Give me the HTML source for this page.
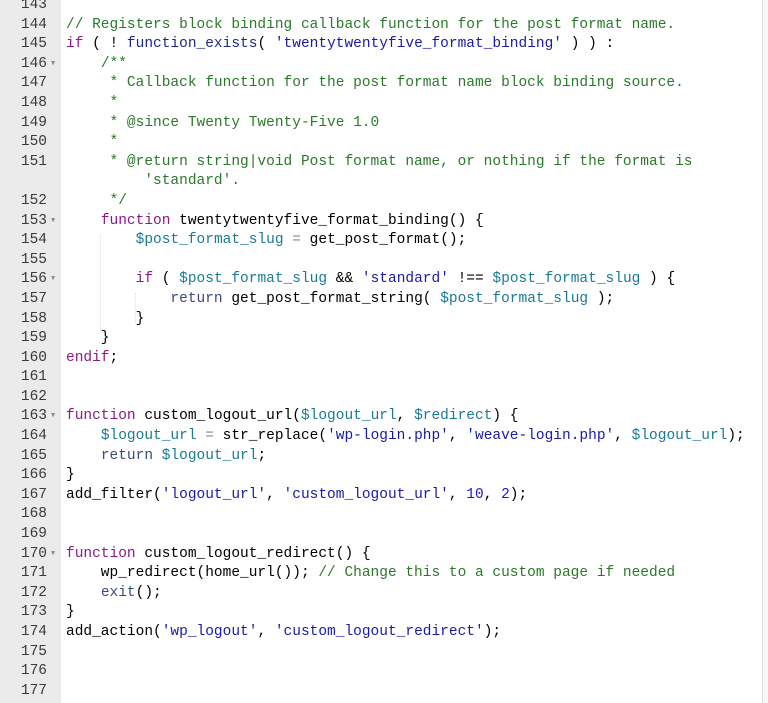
<!DOCTYPE html>
<html><head><meta charset="utf-8"><style>
html,body{margin:0;padding:0;width:768px;height:703px;overflow:hidden;background:#fff;}
.wrap{position:absolute;left:0;top:0;width:768px;height:703px;overflow:hidden;}
.gut{position:absolute;left:0;top:0;width:61px;height:703px;background:#ebebeb;}
.rb{position:absolute;left:762px;top:0;width:6px;height:703px;background:#f7f7f7;border-left:1px solid #ddd;}
.rows{position:absolute;left:0;top:-4px;width:762px;font-family:"Liberation Mono",monospace;font-size:14.5px;}
.r{position:relative;height:19.6px;line-height:19.6px;white-space:pre;}
.n{position:absolute;left:0;width:47px;text-align:right;color:#3a3a3a;}
.f{position:absolute;left:51px;top:0;font-size:7px;color:#888;}
.c{position:absolute;left:66px;color:#000;}
.cm{color:#2a7a2a}.k{color:#8a1a8a}.s{color:#1a1aa6}.v{color:#1a7a95}.d{color:#1e2a8a}.nu{color:#1a1acc}.rt{color:#3a4a80}.o{color:#888}
.g{position:absolute;width:0;border-left:1px dotted #ddd;}
</style></head><body><div class="wrap">
<div class="gut"></div>
<div class="g" style="left:100px;top:235px;height:98px"></div>
<div class="g" style="left:135px;top:293px;height:30px"></div>
<div class="rb"></div>
<div class="rows">
<div class="r"><span class="n">143</span><span class="c"></span></div>
<div class="r"><span class="n">144</span><span class="c"><span class="cm">// Registers block binding callback function for the post format name.</span></span></div>
<div class="r"><span class="n">145</span><span class="c"><span class="k">if</span> ( ! <span class="d">function_exists</span>( <span class="s">'twentytwentyfive_format_binding'</span> ) ) :</span></div>
<div class="r"><span class="n">146</span><span class="f">▼</span><span class="c">    <span class="cm">/**</span></span></div>
<div class="r"><span class="n">147</span><span class="c"><span class="cm">     * Callback function for the post format name block binding source.</span></span></div>
<div class="r"><span class="n">148</span><span class="c"><span class="cm">     *</span></span></div>
<div class="r"><span class="n">149</span><span class="c"><span class="cm">     * @since Twenty Twenty-Five 1.0</span></span></div>
<div class="r"><span class="n">150</span><span class="c"><span class="cm">     *</span></span></div>
<div class="r"><span class="n">151</span><span class="c"><span class="cm">     * @return string|void Post format name, or nothing if the format is</span></span></div>
<div class="r"><span class="c"><span class="cm">         'standard'.</span></span></div>
<div class="r"><span class="n">152</span><span class="c"><span class="cm">     */</span></span></div>
<div class="r"><span class="n">153</span><span class="f">▼</span><span class="c">    <span class="k">function</span> twentytwentyfive_format_binding() {</span></div>
<div class="r"><span class="n">154</span><span class="c">        <span class="v">$post_format_slug</span> <span class="o">=</span> get_post_format();</span></div>
<div class="r"><span class="n">155</span><span class="c"></span></div>
<div class="r"><span class="n">156</span><span class="f">▼</span><span class="c">        <span class="k">if</span> ( <span class="v">$post_format_slug</span> &amp;&amp; <span class="s">'standard'</span> !== <span class="v">$post_format_slug</span> ) {</span></div>
<div class="r"><span class="n">157</span><span class="c">            <span class="rt">return</span> get_post_format_string( <span class="v">$post_format_slug</span> );</span></div>
<div class="r"><span class="n">158</span><span class="c">        }</span></div>
<div class="r"><span class="n">159</span><span class="c">    }</span></div>
<div class="r"><span class="n">160</span><span class="c"><span class="k">endif</span>;</span></div>
<div class="r"><span class="n">161</span><span class="c"></span></div>
<div class="r"><span class="n">162</span><span class="c"></span></div>
<div class="r"><span class="n">163</span><span class="f">▼</span><span class="c"><span class="k">function</span> custom_logout_url(<span class="v">$logout_url</span>, <span class="v">$redirect</span>) {</span></div>
<div class="r"><span class="n">164</span><span class="c">    <span class="v">$logout_url</span> <span class="o">=</span> str_replace(<span class="s">'wp-login.php'</span>, <span class="s">'weave-login.php'</span>, <span class="v">$logout_url</span>);</span></div>
<div class="r"><span class="n">165</span><span class="c">    <span class="rt">return</span> <span class="v">$logout_url</span>;</span></div>
<div class="r"><span class="n">166</span><span class="c">}</span></div>
<div class="r"><span class="n">167</span><span class="c">add_filter(<span class="s">'logout_url'</span>, <span class="s">'custom_logout_url'</span>, <span class="nu">10</span>, <span class="nu">2</span>);</span></div>
<div class="r"><span class="n">168</span><span class="c"></span></div>
<div class="r"><span class="n">169</span><span class="c"></span></div>
<div class="r"><span class="n">170</span><span class="f">▼</span><span class="c"><span class="k">function</span> custom_logout_redirect() {</span></div>
<div class="r"><span class="n">171</span><span class="c">    wp_redirect(home_url()); <span class="cm">// Change this to a custom page if needed</span></span></div>
<div class="r"><span class="n">172</span><span class="c">    <span class="rt">exit</span>();</span></div>
<div class="r"><span class="n">173</span><span class="c">}</span></div>
<div class="r"><span class="n">174</span><span class="c">add_action(<span class="s">'wp_logout'</span>, <span class="s">'custom_logout_redirect'</span>);</span></div>
<div class="r"><span class="n">175</span><span class="c"></span></div>
<div class="r"><span class="n">176</span><span class="c"></span></div>
<div class="r"><span class="n">177</span><span class="c"></span></div>
<div class="r"><span class="n">178</span><span class="c"></span></div>
</div></div></body></html>
